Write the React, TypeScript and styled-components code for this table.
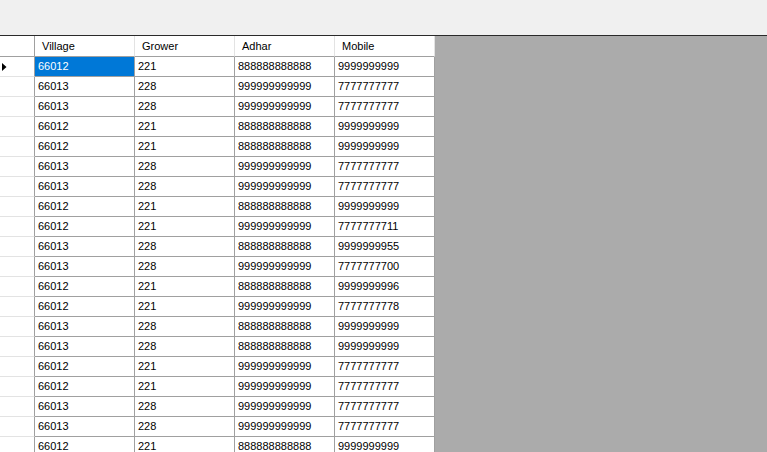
import React from "react";
import styled, { createGlobalStyle } from "styled-components";

const Global = createGlobalStyle`
  html, body { margin: 0; padding: 0; height: 100%; overflow: hidden; }
  body { background: #ababab; font-family: "Liberation Sans", Arial, sans-serif; font-size: 11px; color: #000; }
`;

const Page = styled.div`
  display: flex;
  flex-direction: column;
  width: 767px;
  height: 452px;
  overflow: hidden;
`;

const TopBar = styled.div`
  height: 35px;
  flex: none;
  background: #f0f0f0;
  border-bottom: 1px solid #2a2a2a;
`;

const Body = styled.div`
  display: flex;
  flex: 1;
  min-height: 0;
  background: #ababab;
`;

const Grid = styled.div`
  display: grid;
  grid-template-columns: 35px repeat(4, 100px);
  grid-auto-rows: 20px;
  grid-template-rows: 21px;
  background: #fff;
  align-content: start;
  width: 435px;
  flex: none;
`;

const Corner = styled.div`
  background: #fff;
  border-right: 1px solid #a0a0a0;
  border-bottom: 1px solid #a0a0a0;
`;

const HeaderCell = styled.div`
  display: flex;
  align-items: center;
  padding-left: 7px;
  background: #fff;
  border-right: 1px solid #e3e3e3;
  border-bottom: 1px solid #a0a0a0;
  white-space: nowrap;
`;

const RowHead = styled.div`
  position: relative;
  background: #fff;
  border-right: 1px solid #a0a0a0;
  border-bottom: 1px solid #e3e3e3;
`;

const Arrow = styled.svg`
  position: absolute;
  left: 2px;
  top: 6px;
`;

const Cell = styled.div<{ $selected?: boolean }>`
  display: flex;
  align-items: center;
  padding: 0 0 1px 3px;
  border-right: 1px solid #a0a0a0;
  border-bottom: 1px solid #a0a0a0;
  background: ${(p) => (p.$selected ? "#0078d7" : "#fff")};
  color: ${(p) => (p.$selected ? "#fff" : "#000")};
  white-space: nowrap;
  overflow: hidden;
`;

const Filler = styled.div`
  flex: 1;
  background: #ababab;
`;

type Row = [string, string, string, string];

const A: Row = ["66012", "221", "888888888888", "9999999999"];
const B: Row = ["66013", "228", "999999999999", "7777777777"];

const rows: Row[] = [
  A, B, B, A, A, B, B, A,
  ["66012", "221", "999999999999", "7777777711"],
  ["66013", "228", "888888888888", "9999999955"],
  ["66013", "228", "999999999999", "7777777700"],
  ["66012", "221", "888888888888", "9999999996"],
  ["66012", "221", "999999999999", "7777777778"],
  ["66013", "228", "888888888888", "9999999999"],
  ["66013", "228", "888888888888", "9999999999"],
  ["66012", "221", "999999999999", "7777777777"],
  ["66012", "221", "999999999999", "7777777777"],
  ["66013", "228", "999999999999", "7777777777"],
  ["66013", "228", "999999999999", "7777777777"],
  A,
];

const headers = ["Village", "Grower", "Adhar", "Mobile"];

export default function App() {
  return (
    <>
      <Global />
      <Page>
        <TopBar />
        <Body>
          <Grid>
            <Corner />
            {headers.map((h) => (
              <HeaderCell key={h}>{h}</HeaderCell>
            ))}
            {rows.map((r, i) => (
              <React.Fragment key={i}>
                <RowHead>
                  {i === 0 && (
                    <Arrow width="5" height="8" viewBox="0 0 5 8">
                      <path d="M0 0 L4.5 4 L0 8 Z" fill="#000" />
                    </Arrow>
                  )}
                </RowHead>
                {r.map((v, j) => (
                  <Cell key={j} $selected={i === 0 && j === 0}>
                    {v}
                  </Cell>
                ))}
              </React.Fragment>
            ))}
          </Grid>
          <Filler />
        </Body>
      </Page>
    </>
  );
}
